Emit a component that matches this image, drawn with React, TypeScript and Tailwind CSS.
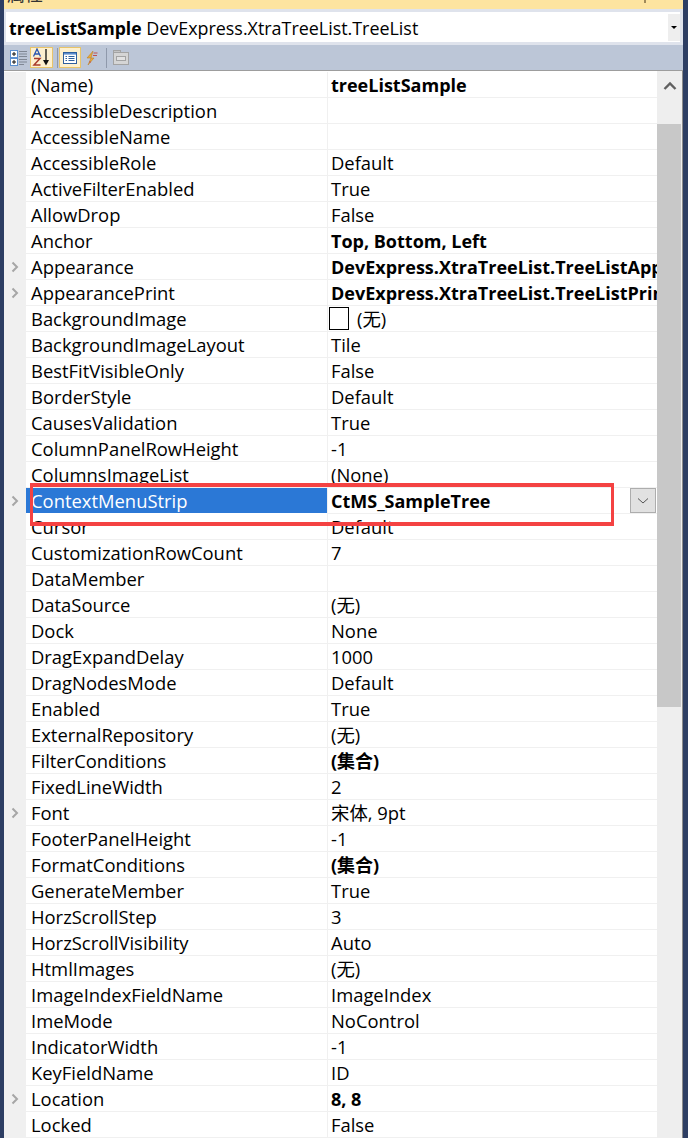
import React from 'react';

interface Prop {
  name: string;
  value?: string;
  bold?: boolean;
  expand?: boolean;
  swatch?: boolean;
  selected?: boolean;
}

const props: Prop[] = [
  { name: '(Name)', value: 'treeListSample', bold: true },
  { name: 'AccessibleDescription' },
  { name: 'AccessibleName' },
  { name: 'AccessibleRole', value: 'Default' },
  { name: 'ActiveFilterEnabled', value: 'True' },
  { name: 'AllowDrop', value: 'False' },
  { name: 'Anchor', value: 'Top, Bottom, Left', bold: true },
  { name: 'Appearance', value: 'DevExpress.XtraTreeList.TreeListAppearanceCollection', bold: true, expand: true },
  { name: 'AppearancePrint', value: 'DevExpress.XtraTreeList.TreeListPrintAppearanceCollection', bold: true, expand: true },
  { name: 'BackgroundImage', value: '(无)', swatch: true },
  { name: 'BackgroundImageLayout', value: 'Tile' },
  { name: 'BestFitVisibleOnly', value: 'False' },
  { name: 'BorderStyle', value: 'Default' },
  { name: 'CausesValidation', value: 'True' },
  { name: 'ColumnPanelRowHeight', value: '-1' },
  { name: 'ColumnsImageList', value: '(None)' },
  { name: 'ContextMenuStrip', value: 'CtMS_SampleTree', bold: true, expand: true, selected: true },
  { name: 'Cursor', value: 'Default' },
  { name: 'CustomizationRowCount', value: '7' },
  { name: 'DataMember' },
  { name: 'DataSource', value: '(无)' },
  { name: 'Dock', value: 'None' },
  { name: 'DragExpandDelay', value: '1000' },
  { name: 'DragNodesMode', value: 'Default' },
  { name: 'Enabled', value: 'True' },
  { name: 'ExternalRepository', value: '(无)' },
  { name: 'FilterConditions', value: '(集合)', bold: true },
  { name: 'FixedLineWidth', value: '2' },
  { name: 'Font', value: '宋体, 9pt', expand: true },
  { name: 'FooterPanelHeight', value: '-1' },
  { name: 'FormatConditions', value: '(集合)', bold: true },
  { name: 'GenerateMember', value: 'True' },
  { name: 'HorzScrollStep', value: '3' },
  { name: 'HorzScrollVisibility', value: 'Auto' },
  { name: 'HtmlImages', value: '(无)' },
  { name: 'ImageIndexFieldName', value: 'ImageIndex' },
  { name: 'ImeMode', value: 'NoControl' },
  { name: 'IndicatorWidth', value: '-1' },
  { name: 'KeyFieldName', value: 'ID' },
  { name: 'Location', value: '8, 8', bold: true, expand: true },
  { name: 'Locked', value: 'False' },
];

function Chevron() {
  return (
    <svg width="10" height="12" viewBox="0 0 10 12" fill="none">
      <path d="M2.5 1.5 L7 6 L2.5 10.5" stroke="#a6a6a6" strokeWidth="2" />
    </svg>
  );
}

function Row({ p }: { p: Prop }) {
  return (
    <div className="flex h-[26px] shrink-0">
      <div className="w-[22px] h-full bg-[#f0f0f0] flex items-center justify-center shrink-0">
        {p.expand && <Chevron />}
      </div>
      <div
        className={
          p.selected
            ? 'w-[301px] h-full pl-[5px] bg-[#2b78d6] text-white flex items-center border-b border-white shrink-0'
            : 'w-[301px] h-full pl-[5px] flex items-center border-b border-[#f0f0f0] shrink-0'
        }
      >
        <span className="whitespace-nowrap">{p.name}</span>
      </div>
      <div className="flex-1 min-w-0 h-full pl-[3px] flex items-center border-b border-l border-[#f0f0f0] overflow-hidden relative">
        {p.swatch && <span className="w-[20px] h-[23px] border border-black mr-[8px] -ml-[2px] shrink-0" />}
        <span className={p.bold ? 'whitespace-nowrap font-bold text-[18px] mt-[2px]' : 'whitespace-nowrap'}>{p.value}</span>
        {p.selected && (
          <span className="absolute right-px top-0 w-[26px] h-[25px] bg-[#e1e1e1] border border-[#adadad] flex items-center justify-center">
            <svg width="12" height="8" viewBox="0 0 12 8" fill="none">
              <path d="M1 1.5 L6 6 L11 1.5" stroke="#555" strokeWidth="1" />
            </svg>
          </span>
        )}
      </div>
    </div>
  );
}

function ToolbarIcons() {
  return (
    <div className="h-[25px] flex items-center pl-[5px]">
      {/* categorized */}
      <svg width="20" height="18" viewBox="0 0 20 18" className="ml-[1px]">
        <rect x="0.5" y="1.5" width="7" height="7" fill="#fff" stroke="#5b8fd0" />
        <path d="M2 5 H6 M4 3 V7" stroke="#111" />
        <rect x="0.5" y="9.5" width="7" height="7" fill="#fff" stroke="#5b8fd0" />
        <path d="M2 13 H6 M4 11 V15" stroke="#111" />
        <path d="M9 2.5 H17 M9 5 H17 M9 7.5 H17 M9 10.5 H17 M9 13 H17 M9 15.5 H14" stroke="#7f8794" />
      </svg>
      <div className="w-[23px] h-[21px] bg-[#fdf0cf] border border-[#e8c46a] flex items-center justify-center">
        <svg width="19" height="19" viewBox="0 0 19 19">
          <path d="M14 1 V14" stroke="#111" strokeWidth="1.3" />
          <path d="M11 12 L14 17.5 L17 12 Z" fill="#111" />
          <path d="M1.5 8.5 L5 1 L8.5 8.5 M3 6 H7" stroke="#2a55b0" strokeWidth="1.3" fill="none" />
          <path d="M2 10.5 H8 L2 17 H8.5" stroke="#a83a2c" strokeWidth="1.5" fill="none" />
        </svg>
      </div>
      <div className="w-px h-[20px] bg-[#8f99ab] ml-[4px]" />
      <div className="w-[22px] h-[21px] bg-[#fdf0cf] border border-[#e8c46a] flex items-center justify-center ml-[1px]">
        <svg width="14" height="12" viewBox="0 0 14 12">
          <rect x="0.5" y="0.5" width="13" height="11" fill="#fff" stroke="#2f5f9e" />
          <rect x="1" y="1" width="12" height="1.6" fill="#5c8ccc" />
          <path d="M2.5 4.5 H4 M5.5 4.5 H11.5 M2.5 6.5 H4 M5.5 6.5 H11.5 M2.5 8.5 H4 M5.5 8.5 H11.5" stroke="#2f5f9e" />
        </svg>
      </div>
      <svg width="12" height="16" viewBox="0 0 12 16" className="ml-[5px]">
        <path d="M7 1 L1 8 H5 L2 15 L8 8 H5 Z" fill="#e9a93a" stroke="#b77a1e" strokeWidth="0.5" />
        <path d="M7.5 3 H11.5 M7 5.5 H11 M3 12 H5" stroke="#c0504d" />
      </svg>
      <div className="w-px h-[20px] bg-[#8f99ab] ml-[8px]" />
      <svg width="16" height="16" viewBox="0 0 16 16" className="ml-[6px]">
        <rect x="0.5" y="2.5" width="15" height="12" fill="#d5d5d5" stroke="#a3a3a3" />
        <rect x="0.5" y="0.5" width="7" height="2" fill="#c4c4c4" stroke="#a3a3a3" />
        <rect x="3.5" y="6.5" width="9" height="4" fill="#e2e2e2" stroke="#a3a3a3" />
      </svg>
    </div>
  );
}

export default function App() {
  return (
    <div
      className="relative w-[688px] h-[1138px] overflow-hidden bg-[#2d3e63] text-[18.4px] text-black flex pl-[4px] pr-[5px]"
      style={{ fontFamily: '"Open Sans", "Noto Sans CJK SC", sans-serif' }}
    >
      <div className="flex-1 min-w-0 flex flex-col bg-white">
        <div className="h-[9px] bg-[#fde4a0] shrink-0 overflow-hidden flex justify-between pl-[3px] pr-[37px]">
          <div className="text-[18px] leading-[18px] -mt-[15px] text-[#333] whitespace-nowrap">属性</div>
          <div className="w-[2px] h-[3px] bg-[#a08a5a]" />
        </div>
        <div className="h-[36px] shrink-0 bg-[#dfe3ec] py-[3px] pl-[2px] pr-[3px]">
          <div className="h-[30px] bg-white flex items-center justify-between pl-[3px] pr-0">
            <div className="whitespace-nowrap pt-[2px] text-[17.9px]">
              <span className="font-bold text-[17.6px]">treeListSample</span> DevExpress.XtraTreeList.TreeList
            </div>
            <div className="w-[12px] h-[27px] bg-[#eeeeee] flex items-center justify-center">
              <div className="w-0 h-0 border-x-[3px] border-x-transparent border-t-[3px] border-t-black" />
            </div>
          </div>
        </div>
        <div className="h-[26px] shrink-0 bg-[#bcc6d7] border-b border-[#9d9d9d]">
          <ToolbarIcons />
        </div>
        <div className="flex-1 min-h-0 flex">
          <div className="w-[653px] min-w-0 flex flex-col pt-px">
            {props.map((p) => (
              <Row key={p.name} p={p} />
            ))}
          </div>
          <div className="flex-1 bg-[#eeeeee] flex flex-col border-r border-[#8a8a8a]">
            <div className="h-[53px] w-full pt-[10px] flex justify-center shrink-0">
              <svg width="14" height="10" viewBox="0 0 14 10" fill="none">
                <path d="M1.5 8 L7 2.5 L12.5 8" stroke="#606060" strokeWidth="2.4" />
              </svg>
            </div>
            <div className="w-[24px] h-[583px] bg-[#c8c8c8]" />
          </div>
        </div>
      </div>
      <div className="absolute left-[30px] top-[483px] w-[584px] h-[43px] border-y-4 border-x-[3px] border-[#f44242]" />
    </div>
  );
}
